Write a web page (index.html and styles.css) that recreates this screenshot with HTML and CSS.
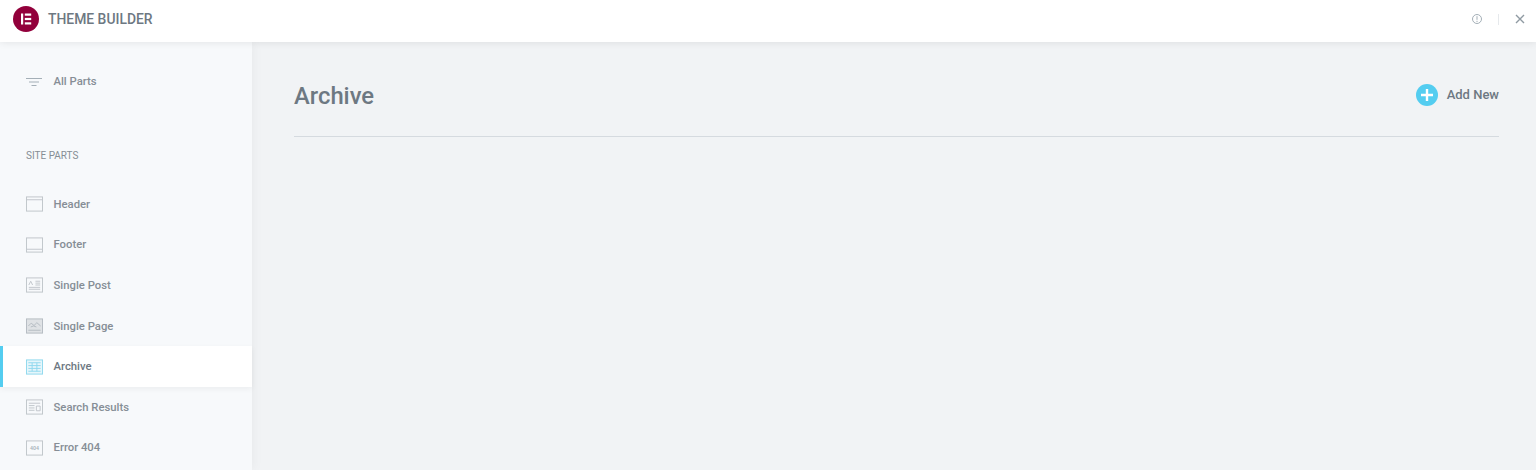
FILE: index.html
```html
<!DOCTYPE html>
<html lang="en">
<head>
    <meta charset="UTF-8">
    <title>Theme Builder</title>
    <link rel="stylesheet" href="styles.css">
</head>
<body>
    <div class="top_bar">
        <div class="logo_wrap">
            <svg class="logo" viewBox="0 0 26 26">
                <circle cx="13" cy="13" r="13" fill="#92003b"/>
                <rect x="8" y="7.5" width="2.2" height="11" fill="#fff"/>
                <rect x="11.8" y="7.5" width="6.4" height="2.2" fill="#fff"/>
                <rect x="11.8" y="11.9" width="6.4" height="2.2" fill="#fff"/>
                <rect x="11.8" y="16.3" width="6.4" height="2.2" fill="#fff"/>
            </svg>
            <span class="logo_text">THEME BUILDER</span>
        </div>
        <div class="top_actions">
            <svg class="info_icon" viewBox="0 0 12 12" fill="none" stroke="#a4afb7">
                <circle cx="6" cy="6" r="4.5"/>
                <path d="M6 3.2v3.6M6 7.8v1.2"/>
            </svg>
            <span class="divider"></span>
            <svg class="close_icon" viewBox="0 0 12 12" fill="none" stroke="#8f9aa2" stroke-width="1.4">
                <path d="M2 2l8 8M10 2l-8 8"/>
            </svg>
        </div>
    </div>

    <div class="main">
        <div class="sidebar">
            <div class="all_parts">
                <svg class="filter_icon" viewBox="0 0 16 8" fill="none" stroke="#a4afb7">
                    <path d="M0 .5h16M3 4h10M5.5 7.5h5"/>
                </svg>
                <span>All Parts</span>
            </div>
            <div class="side_title">SITE PARTS</div>

            <div class="side_item">
                <svg class="part_icon" viewBox="0 0 18 16" fill="none" stroke="#bfc5ca">
                    <rect x=".5" y=".5" width="17" height="15"/>
                    <path d="M.5 3.5h17"/>
                </svg>
                <span>Header</span>
            </div>
            <div class="side_item">
                <svg class="part_icon" viewBox="0 0 18 16" fill="none" stroke="#bfc5ca">
                    <rect x=".5" y=".5" width="17" height="15"/>
                    <path d="M.5 12.5h17"/>
                </svg>
                <span>Footer</span>
            </div>
            <div class="side_item">
                <svg class="part_icon" viewBox="0 0 18 16" fill="none" stroke="#bfc5ca">
                    <rect x=".5" y=".5" width="17" height="15"/>
                    <path d="M3 8l2-4 2 4M10 4h5M10 6h5M10 8h5M3 10.5h12M3 12.5h12"/>
                </svg>
                <span>Single Post</span>
            </div>
            <div class="side_item">
                <svg class="part_icon" viewBox="0 0 18 16" fill="#dfe2e5" stroke="#b4bbc1">
                    <rect x=".5" y=".5" width="17" height="15"/>
                    <path d="M2.5 8l3-3 3 2.5 3-3 4 3.5M5 9l3-1 3 1M2.5 12.5h13" fill="none"/>
                </svg>
                <span>Single Page</span>
            </div>
            <div class="side_item active">
                <svg class="part_icon" viewBox="0 0 18 16" fill="none" stroke="#8ed8ee">
                    <rect x=".5" y=".5" width="17" height="15" fill="#e6f6fb"/>
                    <path d="M2.5 3.5h13M2.5 6.5h13M2.5 9.5h13M2.5 12.5h13M6.5 3.5v9M11.5 3.5v9"/>
                </svg>
                <span>Archive</span>
            </div>
            <div class="side_item">
                <svg class="part_icon" viewBox="0 0 18 16" fill="none" stroke="#bfc5ca">
                    <rect x=".5" y=".5" width="17" height="15"/>
                    <path d="M3 4h12M3 6.5h6M3 9h6M3 11.5h6M11 7h4v5h-4z"/>
                </svg>
                <span>Search Results</span>
            </div>
            <div class="side_item">
                <svg class="part_icon" viewBox="0 0 18 16" fill="none" stroke="#bfc5ca">
                    <rect x=".5" y=".5" width="17" height="15"/>
                    <text x="9" y="10.2" class="icon_text">404</text>
                </svg>
                <span>Error 404</span>
            </div>
        </div>

        <div class="content">
            <div class="content_head">
                <h1>Archive</h1>
                <div class="add_new">
                    <svg class="add_icon" viewBox="0 0 22 22">
                        <circle cx="11" cy="11" r="11" fill="#54cdf0"/>
                        <path d="M11 5v12M5 11h12" stroke="#fff" stroke-width="2.4"/>
                    </svg>
                    <span class="add_label">Add New</span>
                </div>
            </div>
        </div>
    </div>
</body>
</html>
```

FILE: styles.css
```css
* {
  box-sizing: border-box;
}

html, body {
  height: 100%;
  overflow: hidden;
}

body {
  margin: 0;
  font-family: Roboto, "Liberation Sans", sans-serif;
  background-color: #f1f3f5;
  color: #6d7882;
  display: flex;
  flex-direction: column;
}

.top_bar {
  position: relative;
  z-index: 2;
  height: 42px;
  flex-shrink: 0;
  background-color: #fff;
  box-shadow: 0 0 8px rgba(0, 0, 0, 0.1);
  display: flex;
  justify-content: space-between;
  align-items: center;
  padding: 0 10px 5px 13px;
}

.logo_wrap {
  display: flex;
  align-items: center;
  gap: 9px;
}

.logo {
  width: 26px;
  height: 26px;
}

.logo_text {
  font-size: 13.9px;
  font-weight: 500;
  color: #6d7882;
}

.top_actions {
  display: flex;
  align-items: center;
}

.info_icon {
  width: 12px;
  height: 12px;
  margin-top: 1px;
}

.divider {
  width: 1px;
  height: 11px;
  background-color: #e6e9ec;
  margin: 1px 15px 0 15px;
}

.close_icon {
  width: 12px;
  height: 12px;
  margin-top: 1px;
}

.main {
  flex: 1;
  display: flex;
  min-height: 0;
}

.sidebar {
  width: 252px;
  flex-shrink: 0;
  background-color: #f7f9fb;
  box-shadow: 2px 0 10px rgba(0, 0, 0, 0.04);
  padding-top: 19px;
  position: relative;
  z-index: 1;
}

.all_parts {
  display: flex;
  align-items: center;
  height: 40px;
  padding-left: 26px;
  font-size: 11.3px;
  font-weight: 500;
  color: #868e96;
}

.filter_icon {
  width: 16px;
  height: 8px;
  margin-right: 11.5px;
  margin-top: 2px;
}

.side_title {
  margin: 48px 0 21px 26px;
  height: 14px;
  line-height: 14px;
  font-size: 10px;
  color: #858d94;
}

.side_item {
  display: flex;
  align-items: center;
  height: 40.6px;
  padding-left: 26px;
  font-size: 11.3px;
  font-weight: 500;
  color: #868e96;
}

.part_icon {
  width: 17px;
  height: 16px;
  margin-right: 10.5px;
}

.icon_text {
  font-family: Roboto, sans-serif;
  font-size: 5.5px;
  text-anchor: middle;
  fill: #a4afb7;
  stroke: none;
}

.side_item.active {
  background-color: #fff;
  color: #6d7882;
  border-left: 3px solid #54cdf0;
  padding-left: 23px;
  box-shadow: 0 2px 6px rgba(0, 0, 0, 0.05);
}

.content {
  flex: 1;
  padding: 0 37px 0 42px;
}

.content_head {
  height: 95px;
  display: flex;
  justify-content: space-between;
  align-items: center;
  border-bottom: 1px solid #d5dadf;
}

.content_head h1 {
  margin: 14px 0 0 0;
  font-size: 23.8px;
  font-weight: 500;
  color: #6d7882;
}

.add_new {
  display: flex;
  align-items: center;
  gap: 9px;
  margin-top: 12px;
  font-size: 13px;
  font-weight: 500;
  color: #6d7882;
}

.add_label {
  margin-bottom: 2px;
}

.add_icon {
  width: 22px;
  height: 22px;
}
```
